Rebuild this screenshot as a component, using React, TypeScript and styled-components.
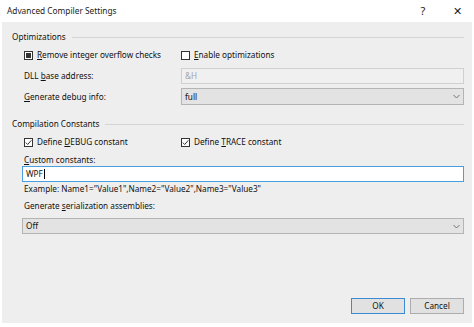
import * as React from 'react'
import { FC } from 'react'
import styled, { createGlobalStyle } from 'styled-components'

const Global = createGlobalStyle`
    html, body {
        margin: 0;
        padding: 0;
        background: #ffffff;
    }
    body {
        font-family: "Noto Sans", "Liberation Sans", sans-serif;
        font-size: 8.2px;
        line-height: 12px;
        color: #111111;
    }
`

const Window = styled.div`
    width: 474px;
    height: 327px;
    display: flex;
    flex-direction: column;
    background: #ffffff;
    box-sizing: border-box;
`

const TitleBar = styled.div`
    height: 22px;
    display: flex;
    align-items: center;
    padding-left: 7px;
    font-size: 8.3px;
    color: #1b1b1b;
`

const Title = styled.span`
    flex: 1;
`

const TitleButton = styled.span`
    width: 34px;
    text-align: center;
    font-size: 11px;
    color: #222;
`

const Content = styled.div`
    flex: 1;
    margin: 0 2px 4px 2px;
    background: #eeeeee;
    display: flex;
    flex-direction: column;
    padding: 9px 8px 0 10px;
`

const GroupHeader = styled.div<{ $top?: number }>`
    margin-top: ${p => p.$top ?? 0}px;
    height: 12px;
    display: flex;
    align-items: center;
    gap: 6px;
    &::after {
        content: '';
        flex: 1;
        height: 1px;
        background: #d4d4d4;
    }
`

const Row = styled.div<{ $top: number; $indent?: number }>`
    margin-top: ${p => p.$top}px;
    padding-left: ${p => p.$indent ?? 12}px;
    display: flex;
    align-items: center;
`

const CheckRow = styled.div<{ $top: number }>`
    margin-top: ${p => p.$top}px;
    display: grid;
    grid-template-columns: 157px 1fr;
    padding-left: 12px;
    height: 12px;
    align-items: center;
`

const FieldRow = styled.div<{ $top: number }>`
    margin-top: ${p => p.$top}px;
    display: grid;
    grid-template-columns: 157px 1fr;
    padding-left: 12px;
    align-items: center;
`

const Check = styled.label`
    display: flex;
    align-items: center;
    gap: 4px;
`

const Box = styled.span`
    width: 9px;
    height: 9px;
    border: 1px solid #333333;
    background: #ffffff;
    display: flex;
    align-items: center;
    justify-content: center;
    box-sizing: border-box;
`

const Fill = styled.span`
    width: 5px;
    height: 5px;
    background: #333333;
`

const TextBox = styled.div<{ $disabled?: boolean; $focused?: boolean }>`
    height: 16px;
    box-sizing: border-box;
    display: flex;
    align-items: center;
    padding-left: 3px;
    border: 1px solid ${p => (p.$focused ? '#4a9fe0' : p.$disabled ? '#d0d0d0' : '#acacac')};
    background: ${p => (p.$disabled ? '#f0f0f0' : '#ffffff')};
    color: ${p => (p.$disabled ? '#a5a5a5' : '#111111')};
`

const Caret = styled.span`
    width: 1px;
    height: 10px;
    background: #000;
    margin-left: 1px;
`

const Combo = styled.div<{ $height?: number }>`
    height: ${p => p.$height ?? 17}px;
    box-sizing: border-box;
    display: flex;
    align-items: center;
    justify-content: space-between;
    padding: 0 3px 0 3px;
    border: 1px solid #b4b4b4;
    background: #e3e3e3;
`

const Footer = styled.div`
    margin-top: auto;
    margin-bottom: 9px;
    display: flex;
    justify-content: flex-end;
    gap: 5px;
`

const Button = styled.div<{ $default?: boolean }>`
    width: 54px;
    height: 16px;
    box-sizing: border-box;
    display: flex;
    align-items: center;
    justify-content: center;
    background: #e1e1e1;
    border: 1px solid ${p => (p.$default ? '#3a8ad6' : '#adadad')};
`

const Chevron: FC = () => (
    <svg width="7" height="5" viewBox="0 0 7 5">
        <polyline points="0.5,1 3.5,4 6.5,1" fill="none" stroke="#707070" strokeWidth="1" />
    </svg>
)

const CheckMark: FC = () => (
    <svg width="7" height="7" viewBox="0 0 7 7">
        <polyline points="0.8,3.6 2.7,5.5 6.3,1.3" fill="none" stroke="#333" strokeWidth="1" />
    </svg>
)

const App: FC = () => {
    return (
        <Window>
            <Global />
            <TitleBar>
                <Title>Advanced Compiler Settings</Title>
                <TitleButton>?</TitleButton>
                <TitleButton>✕</TitleButton>
            </TitleBar>
            <Content>
                <GroupHeader>Optimizations</GroupHeader>
                <CheckRow $top={6}>
                    <Check><Box><Fill /></Box><span><u>R</u>emove integer overflow checks</span></Check>
                    <Check><Box /><span><u>E</u>nable optimizations</span></Check>
                </CheckRow>
                <FieldRow $top={7}>
                    <span>DLL <u>b</u>ase address:</span>
                    <TextBox $disabled>&amp;H</TextBox>
                </FieldRow>
                <FieldRow $top={4}>
                    <span><u>G</u>enerate debug info:</span>
                    <Combo><span>full</span><Chevron /></Combo>
                </FieldRow>
                <GroupHeader $top={13}>Compilation Constants</GroupHeader>
                <CheckRow $top={6}>
                    <Check><Box><CheckMark /></Box><span>Define <u>D</u>EBUG constant</span></Check>
                    <Check><Box><CheckMark /></Box><span>Define <u>T</u>RACE constant</span></Check>
                </CheckRow>
                <Row $top={6}><span><u>C</u>ustom constants:</span></Row>
                <Row $top={0} $indent={10}>
                    <TextBox $focused style={{ flex: 1 }}>WPF<Caret /></TextBox>
                </Row>
                <Row $top={1}><span>Example: Name1="Value1",Name2="Value2",Name3="Value3"</span></Row>
                <Row $top={5}><span>Generate <u>s</u>erialization assemblies:</span></Row>
                <Row $top={6} $indent={10}>
                    <Combo $height={16} style={{ flex: 1 }}><span>Off</span><Chevron /></Combo>
                </Row>
                <Footer>
                    <Button $default>OK</Button>
                    <Button>Cancel</Button>
                </Footer>
            </Content>
        </Window>
    )
}

export default App
